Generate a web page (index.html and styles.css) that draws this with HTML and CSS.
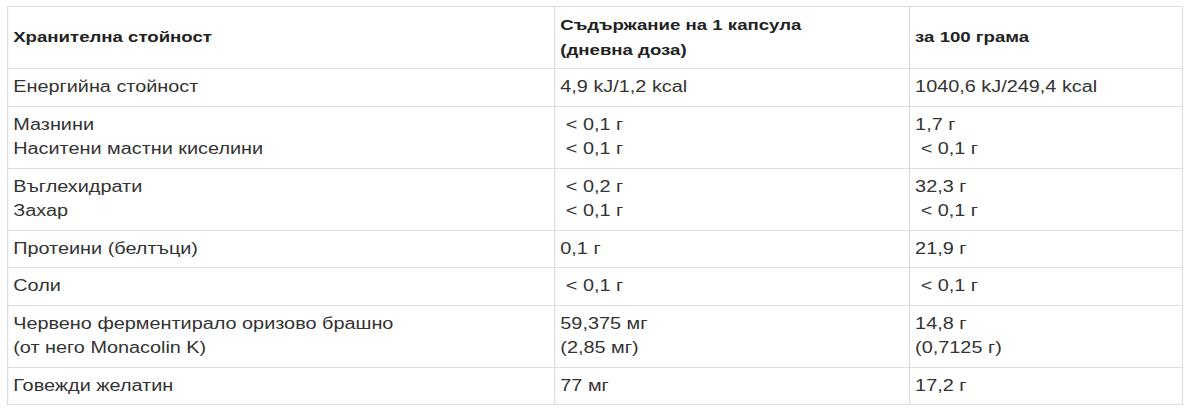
FILE: index.html
```html
<!DOCTYPE html>
<html lang="bg">
<head>
<meta charset="utf-8">
<title>Хранителна стойност</title>
<link rel="stylesheet" href="styles.css">
</head>
<body>
<div class="sheet">
<table class="nutrition">
  <colgroup>
    <col class="c1">
    <col class="c2">
    <col class="c3">
  </colgroup>
  <thead>
    <tr>
      <th>Хранителна стойност</th>
      <th>Съдържание на 1 капсула<br>(дневна доза)</th>
      <th>за 100 грама</th>
    </tr>
  </thead>
  <tbody>
    <tr>
      <td>Енергийна стойност</td>
      <td>4,9 kJ/1,2 kcal</td>
      <td>1040,6 kJ/249,4 kcal</td>
    </tr>
    <tr>
      <td>Мазнини<br>Наситени мастни киселини</td>
      <td>&nbsp;&lt; 0,1 г<br>&nbsp;&lt; 0,1 г</td>
      <td>1,7 г<br>&nbsp;&lt; 0,1 г</td>
    </tr>
    <tr>
      <td>Въглехидрати<br>Захар</td>
      <td>&nbsp;&lt; 0,2 г<br>&nbsp;&lt; 0,1 г</td>
      <td>32,3 г<br>&nbsp;&lt; 0,1 г</td>
    </tr>
    <tr>
      <td>Протеини (белтъци)</td>
      <td>0,1 г</td>
      <td>21,9 г</td>
    </tr>
    <tr>
      <td>Соли</td>
      <td>&nbsp;&lt; 0,1 г</td>
      <td>&nbsp;&lt; 0,1 г</td>
    </tr>
    <tr>
      <td>Червено ферментирало оризово брашно<br>(от него Monacolin K)</td>
      <td>59,375 мг<br>(2,85 мг)</td>
      <td>14,8 г<br>(0,7125 г)</td>
    </tr>
    <tr>
      <td>Говежди желатин</td>
      <td>77 мг</td>
      <td>17,2 г</td>
    </tr>
  </tbody>
</table>
</div>
</body>
</html>
```
FILE: styles.css
```css
html, body {
  margin: 0;
  padding: 0;
  background: #ffffff;
}

body {
  font-family: "Liberation Sans", Arial, sans-serif;
  font-size: 16px;
  color: #333333;
}

/* the reference is rendered horizontally widened */
.sheet {
  margin: 6px 0 0 7px;
  width: 947px;
  transform: scaleX(1.2406);
  transform-origin: 0 0;
}

.nutrition {
  border-collapse: collapse;
  width: 947px;
  table-layout: fixed;
}

.c1 { width: 441px; }
.c2 { width: 286px; }
.c3 { width: 220px; }

.nutrition th,
.nutrition td {
  border: 1px solid #dddddd;
  padding: 6px 4px;
  line-height: 24.5px;
  text-align: left;
  vertical-align: top;
}

.nutrition th {
  font-weight: bold;
  font-size: 15px;
  color: #222222;
  vertical-align: middle;
}
```
